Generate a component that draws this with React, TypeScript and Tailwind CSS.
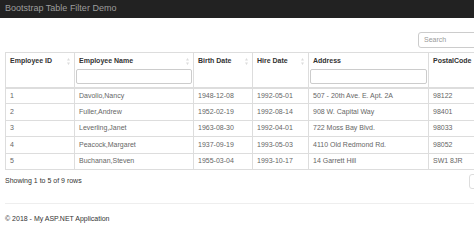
const rows = [
  ["1", "Davolio,Nancy", "1948-12-08", "1992-05-01", "507 - 20th Ave. E. Apt. 2A", "98122"],
  ["2", "Fuller,Andrew", "1952-02-19", "1992-08-14", "908 W. Capital Way", "98401"],
  ["3", "Leverling,Janet", "1963-08-30", "1992-04-01", "722 Moss Bay Blvd.", "98033"],
  ["4", "Peacock,Margaret", "1937-09-19", "1993-05-03", "4110 Old Redmond Rd.", "98052"],
  ["5", "Buchanan,Steven", "1955-03-04", "1993-10-17", "14 Garrett Hill", "SW1 8JR"],
];

const cols = [
  { title: "Employee ID", w: "w-[69px]", sort: true, filter: false },
  { title: "Employee Name", w: "w-[119px]", sort: true, filter: true },
  { title: "Birth Date", w: "w-[59px]", sort: true, filter: false },
  { title: "Hire Date", w: "w-[56px]", sort: true, filter: false },
  { title: "Address", w: "w-[120px]", sort: false, filter: true },
  { title: "PostalCode", w: "w-[97px]", sort: false, filter: false },
];

function SortIcon() {
  return (
    <svg width="3" height="7" viewBox="0 0 3 7" className="shrink-0">
      <path d="M1.5 0 L3 2.5 H0 Z M1.5 7 L3 4.5 H0 Z" fill="#dcdcdc" />
    </svg>
  );
}

export default function App() {
  return (
    <div className="h-[248px] w-[474px] overflow-hidden bg-white font-['Liberation_Sans',Arial,sans-serif]">
      <nav className="flex h-[18px] items-center bg-[#222] px-[5px] text-[9px] text-[#9d9d9d]">
        Bootstrap Table Filter Demo
      </nav>

      <div className="w-[525px] pl-[5px]">
        <div className="mt-[14px] flex justify-end">
          <div className="flex h-[16px] w-[107px] items-center rounded-[3px] border border-[#ccc] px-[5px] text-[7px] text-[#999]">
            Search
          </div>
        </div>

        <table className="mt-[4px] w-[520px] table-fixed border-collapse border border-[#ddd] text-[7px]">
          <thead>
            <tr className="h-[35px] border-b-2 border-[#ddd]">
              {cols.map((c) => (
                <th key={c.title} className={`${c.w} border-r border-[#ddd] p-0 align-top`}>
                  <div className="flex h-[16px] items-center justify-between px-[4px] text-left font-bold text-[#333]">
                    <span>{c.title}</span>
                    {c.sort && <SortIcon />}
                  </div>
                  {c.filter && <div className="mx-px h-[15px] rounded-[2px] border border-[#ccc] bg-white" />}
                </th>
              ))}
            </tr>
          </thead>
          <tbody>
            {rows.map((r) => (
              <tr key={r[0]} className="h-[16.4px] border-b border-[#ddd]">
                {r.map((v, i) => (
                  <td key={i} className="border-r border-[#ddd] px-[4px] py-0 text-[#666]">
                    {v}
                  </td>
                ))}
              </tr>
            ))}
          </tbody>
        </table>

        <div className="mt-[4px] flex items-center justify-between">
          <span className="text-[7px] text-[#333]">Showing 1 to 5 of 9 rows</span>
          <div className="h-[15px] w-[56px] rounded-[3px] border border-[#ddd]" />
        </div>

        <div className="mt-[14px] border-t border-[#eee]" />
        <div className="mt-[10px] text-[7px] text-[#333]">© 2018 - My ASP.NET Application</div>
      </div>
    </div>
  );
}
